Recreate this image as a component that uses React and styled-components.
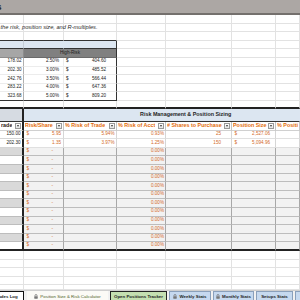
import styled, { createGlobalStyle } from "styled-components"

const GRID = "#e2e2e2"
const DARK = "#333333"
const ORANGE = "#e36c0a"
const RUST = "#d2692a"
const COLS = "24px 40px 53px 49px 66px 44px 1fr"

const riskRows = [
  ["178.02", "2.50%", "404.60"],
  ["202.30", "3.00%", "485.52"],
  ["242.76", "3.50%", "566.44"],
  ["283.22", "4.00%", "647.36"],
  ["323.68", "5.00%", "809.20"],
]

const trades = [
  { entry: "150.00", risk: "5.95", ofTrade: "5.94%", ofAcct: "0.93%", shares: "25", size: "2,527.06" },
  { entry: "202.30", risk: "1.35", ofTrade: "3.97%", ofAcct: "1.25%", shares: "150", size: "5,094.96" },
]
const emptyRows = Array.from({ length: 12 })

const headers = [
  "% Risk of Trade",
  "% Risk of Acct",
  "# Shares to Purchase",
  "Position Size",
]

const tabs = [
  { name: "Trades Log", w: 36, bg: "#ffffff", border: "#111", shift: -12 },
  { name: "Position Size & Risk Calculator", w: 81, bg: "#fbfaf6", border: "transparent", lock: true, active: true },
  { name: "Open Positions Tracker", w: 57, bg: "#c4dfb1", border: "#222" },
  { name: "Weekly Stats", w: 42, bg: "#c6d9ef", border: "#8aa0bb", lock: true },
  { name: "Monthly Stats", w: 41, bg: "#c6d9ef", border: "#8aa0bb", lock: true },
  { name: "Setups Stats", w: 37, bg: "#c6d9ef", border: "#8aa0bb" },
  { name: "", w: 30, bg: "#c6d9ef", border: "#8aa0bb" },
]

export default function App() {
  return (
    <Page>
      <GlobalStyle />
      <TitleBar>
        <TitleTail>s</TitleTail>
      </TitleBar>

      <Sheet>
        <BlankRow />
        <Row>
          <NoteCell>the risk, position size, and R-multiples.</NoteCell>
          <BlankCells count={6} />
        </Row>
        <Row>
          <Cell $bc={DARK} />
          <Cell $bc={DARK} />
          <Cell $bc={DARK} />
          <BlankCells count={4} />
        </Row>

        {/* small risk table */}
        <Row>
          <BandCell $rc="#c6ced8" />
          <BandCell $rc="#dce6f1" />
          <BandCell $rc={DARK} />
          <BlankCells count={4} />
        </Row>
        <Row>
          <Cell $bg="#a6a6a6" $rc="#8c8c8c" $bc="#8c8c8c" />
          <RiskHead $span={2}>High-Risk</RiskHead>
          <BlankCells count={4} />
        </Row>
        {riskRows.map((r, i) => {
          const last = i === riskRows.length - 1
          return (
            <Row key={r[0]}>
              <Cell $jc="flex-end" $pr={1.5} $rc="#b0b0b0" $bc={last ? DARK : "#ececec"}>{r[0]}</Cell>
              <Cell $jc="flex-end" $pr={4} $bc={last ? DARK : "#ececec"} $rc="#ececec">{r[1]}</Cell>
              <Cell $jc="space-between" $pl={2} $pr={10} $rc={DARK} $bc={last ? DARK : "#ececec"}>
                <span>$</span>
                <span>{r[2]}</span>
              </Cell>
              <BlankCells count={4} />
            </Row>
          )
        })}

        <Row $h={8.3}>
          {Array.from({ length: 7 }).map((_, i) => (
            <Cell key={i} $bc="#222" $bw={2} />
          ))}
        </Row>

        {/* position sizing table */}
        <Row $h={12.4}>
          <Cell $bg="#d6dbe2" $rc="#222" $rw={2} $bc={DARK} />
          <SectionTitle $span={6}>Risk Management &amp; Position Sizing</SectionTitle>
        </Row>
        <Row $h={9}>
          <HeadCell $dark $rc="#222" $rw={2}>
            <span>rade</span>
            <Filter />
          </HeadCell>
          <HeadCell>
            <span>Risk/Share</span>
            <Filter />
          </HeadCell>
          {headers.map((h) => (
            <HeadCell key={h}>
              <span>{h}</span>
              <Filter />
            </HeadCell>
          ))}
          <HeadCell>
            <span>% Position of Account</span>
          </HeadCell>
        </Row>

        {trades.map((t) => (
          <Row key={t.entry}>
            <Cell $jc="flex-end" $pr={1.5} $rc="#222" $rw={2} $bc="#d4d4d4">{t.entry}</Cell>
            <PosCell $jc="space-between" $pl={2.5} $pr={2}>
              <span>$</span>
              <span>{t.risk}</span>
            </PosCell>
            <PosCell $jc="flex-end" $pr={1.5}>{t.ofTrade}</PosCell>
            <PosCell $jc="flex-end" $pr={1}>{t.ofAcct}</PosCell>
            <PosCell $jc="flex-end" $pr={10}>{t.shares}</PosCell>
            <PosCell $jc="space-between" $pl={2.5} $pr={5}>
              <span>$</span>
              <span>{t.size}</span>
            </PosCell>
            <PosCell />
          </Row>
        ))}

        {emptyRows.map((_, i) => {
          const last = i === emptyRows.length - 1
          return (
            <Row key={i}>
              <Cell $bg={i % 2 === 0 ? "#d9d9d9" : "#ffffff"} $rc="#222" $rw={2} $bc={last ? "#222" : "#bdbdbd"} $bw={last ? 2 : 1} />
              <PosCell $filled $last={last} $jc="space-between" $pl={2.5} $pr={10}>
                <span>$</span>
                <span>-</span>
              </PosCell>
              <PosCell $filled $last={last} />
              <PosCell $filled $last={last} $jc="flex-end" $pr={1}>0.00%</PosCell>
              <PosCell $filled $last={last} />
              <PosCell $filled $last={last} />
              <PosCell $filled $last={last} />
            </Row>
          )
        })}

        <BlankRow />
        <BlankRow />
        <BlankRow />
        <BlankRow />
        <BlankRow $h={4.5} />
      </Sheet>

      <TabStrip>
        {tabs.map((t, i) => (
          <Tab key={i} $w={t.w} $bg={t.bg} $border={t.border} $shift={t.shift} $active={t.active}>
            {t.lock && <Lock />}
            <span>{t.name}</span>
          </Tab>
        ))}
      </TabStrip>
    </Page>
  )
}

function BlankCells({ count }) {
  return Array.from({ length: count }).map((_, i) => <Cell key={i} />)
}

function BlankRow({ $h }) {
  return (
    <Row $h={$h}>
      <BlankCells count={7} />
    </Row>
  )
}

function Lock() {
  return (
    <svg width="4" height="5" viewBox="0 0 8 10">
      <path d="M2 4.5V3a2 2 0 0 1 4 0v1.5" fill="none" stroke="#666" strokeWidth="1.4" />
      <rect x="0.5" y="4.5" width="7" height="5" rx="0.8" fill="#777" />
    </svg>
  )
}

const GlobalStyle = createGlobalStyle`
  html, body {
    margin: 0;
    padding: 0;
    background: #fff;
  }
  body {
    font-family: "Liberation Sans", Arial, sans-serif;
  }
  * {
    box-sizing: border-box;
  }
`

const Page = styled.div`
  width: 300px;
  height: 300px;
  display: flex;
  flex-direction: column;
  overflow: hidden;
  background: #fff;
`

const TitleBar = styled.div`
  flex: none;
  height: 15px;
  background: #aca7a4;
  border-bottom: 2px solid #74706d;
  display: flex;
  align-items: center;
  overflow: hidden;
`

const TitleTail = styled.span`
  margin-left: -3.5px;
  font: bold 9px "Liberation Sans", Arial, sans-serif;
  color: #1c1c1c;
`

const Sheet = styled.div`
  flex: none;
  display: flex;
  flex-direction: column;
`

const Row = styled.div`
  flex: none;
  display: grid;
  grid-template-columns: ${COLS};
  height: ${(p) => p.$h || 8.6}px;
`

const Cell = styled.div`
  grid-column: span ${(p) => p.$span || 1};
  display: flex;
  align-items: center;
  justify-content: ${(p) => p.$jc || "flex-start"};
  min-width: 0;
  overflow: hidden;
  white-space: nowrap;
  padding: 0 ${(p) => p.$pr ?? 1}px 0 ${(p) => p.$pl ?? 1}px;
  background: ${(p) => p.$bg || "transparent"};
  border-right: ${(p) => p.$rw ?? 1}px solid ${(p) => p.$rc || GRID};
  border-bottom: ${(p) => p.$bw ?? 1}px solid ${(p) => p.$bc || GRID};
  color: #222;
  font-size: 4.6px;
  line-height: 1;
`

const NoteCell = styled(Cell)`
  overflow: visible;
  position: relative;
  z-index: 1;
  padding-left: 0.5px;
  font-size: 5.7px;
  font-style: italic;
  color: #2b2b2b;
`

const BandCell = styled(Cell)`
  background: #dce6f1;
  border-bottom-color: ${DARK};
`

const RiskHead = styled(Cell)`
  background: #808080;
  justify-content: center;
  border-right-color: ${DARK};
  border-bottom-color: #6a6a6a;
  color: #1e1e1e;
  font-size: 4.6px;
`

const SectionTitle = styled(Cell)`
  background: #dce6f1;
  padding-left: 116px;
  border-right-color: #dce6f1;
  border-bottom-color: ${DARK};
  font-size: 5.4px;
  font-weight: 700;
  color: #1f1f1f;
`

const HeadCell = styled(Cell)`
  background: #fff;
  justify-content: space-between;
  gap: 1px;
  padding: 0 1.5px 0 1px;
  border-right-color: ${(p) => p.$rc || "#c4c4c4"};
  border-bottom-color: #d0d0d0;
  font-size: 5.4px;
  font-weight: 700;
  color: ${(p) => (p.$dark ? "#2a1a10" : ORANGE)};

  span {
    overflow: hidden;
  }
`

const Filter = styled.i`
  flex: none;
  width: 6px;
  height: 6px;
  border: 1px solid #9a9a9a;
  background: linear-gradient(#ffffff, #e4e4e4);
  display: flex;
  align-items: center;
  justify-content: center;

  &::after {
    content: "";
    border-left: 1.5px solid transparent;
    border-right: 1.5px solid transparent;
    border-top: 2px solid #333;
  }
`

const PosCell = styled(Cell)`
  background: ${(p) => (p.$filled ? "#f2f2f2" : "#fff")};
  color: ${RUST};
  border-right-color: ${(p) => (p.$filled ? "#a8a8a8" : "#d6d6d6")};
  border-bottom-color: ${(p) => (p.$last ? "#222" : p.$filled ? "#bdbdbd" : "#e0e0e0")};
  border-bottom-width: ${(p) => (p.$last ? 2 : 1)}px;
`

const TabStrip = styled.div`
  flex: 1;
  display: flex;
  align-items: flex-start;
  gap: 2px;
  padding-top: 0.5px;
  background: #f1f1f1;
  border-top: 1px solid #cfcfcf;
  overflow: hidden;
`

const Tab = styled.div`
  flex: none;
  width: ${(p) => p.$w}px;
  height: 10px;
  margin-left: ${(p) => p.$shift || 0}px;
  display: flex;
  align-items: center;
  justify-content: center;
  gap: 2px;
  background: ${(p) => p.$bg};
  border: 1px solid ${(p) => p.$border};
  white-space: nowrap;
  overflow: hidden;
  font-size: 4.4px;
  font-weight: ${(p) => (p.$active ? 400 : 700)};
  color: ${(p) => (p.$active ? "#4f6228" : "#1d1d1d")};

  &:first-child + & {
    margin-left: 1px;
  }
`
